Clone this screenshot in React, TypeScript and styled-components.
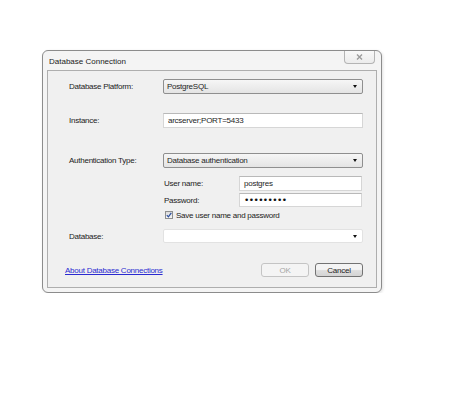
import styled, { createGlobalStyle } from "styled-components";

const GlobalStyle = createGlobalStyle`
  body {
    margin: 0;
    background: #ffffff;
    font-family: "Liberation Sans", Arial, sans-serif;
    color: #1e1e1e;
  }
`;

const Page = styled.div`
  padding: 50px 0 0 42px;
`;

const Window = styled.div`
  width: 340px;
  height: 243px;
  box-sizing: border-box;
  border: 1px solid #8c8c8c;
  border-radius: 6px;
  background: #f4f4f4;
  padding: 0 4px 4px 4px;
  display: flex;
  flex-direction: column;
  box-shadow: 1px 1px 3px rgba(0, 0, 0, 0.12);
`;

const TitleBar = styled.div`
  height: 19px;
  display: flex;
  align-items: center;
  justify-content: space-between;
`;

const Title = styled.span`
  font-size: 8px;
  padding-left: 2px;
  padding-top: 2px;
  color: #222;
`;

const CloseBox = styled.div`
  align-self: flex-start;
  width: 29px;
  height: 12px;
  margin-right: 2px;
  border: 1px solid #b4b4b4;
  border-top: none;
  border-radius: 0 0 4px 4px;
  background: linear-gradient(#f8f8f8, #ececec);
  display: flex;
  align-items: center;
  justify-content: center;
`;

const Panel = styled.div`
  flex: 1;
  border: 1px solid #aeaeae;
  background: #f0f0f0;
  padding: 8px 13px 0 21px;
  display: flex;
  flex-direction: column;
`;

const Row = styled.div<{ $top: number; $h?: number }>`
  display: flex;
  align-items: center;
  margin-top: ${({ $top }) => $top}px;
  height: ${({ $h }) => $h ?? 15}px;
`;

const Label = styled.span<{ $w?: number }>`
  width: ${({ $w }) => $w ?? 94}px;
  flex-shrink: 0;
  font-size: 8px;
  letter-spacing: -0.25px;
  color: #222;
`;

const Select = styled.div<{ $flat?: boolean }>`
  width: 200px;
  height: 100%;
  box-sizing: border-box;
  border: 1px solid ${({ $flat }) => ($flat ? "#e2e2e2" : "#8f8f8f")};
  border-radius: 2px;
  background: ${({ $flat }) =>
    $flat ? "#ffffff" : "linear-gradient(#f6f6f6, #e4e4e4)"};
  display: flex;
  align-items: center;
  justify-content: space-between;
  padding: 0 5px 0 3px;
  font-size: 8px;
  letter-spacing: -0.25px;
`;

const Arrow = styled.span`
  width: 0;
  height: 0;
  border-left: 2.5px solid transparent;
  border-right: 2.5px solid transparent;
  border-top: 3px solid #111;
`;

const Input = styled.div<{ $w?: number }>`
  width: ${({ $w }) => $w ?? 200}px;
  height: 100%;
  box-sizing: border-box;
  border: 1px solid #d6d6d6;
  border-top-color: #b9b9b9;
  background: #ffffff;
  display: flex;
  align-items: center;
  padding: 0 4px;
  font-size: 8px;
  letter-spacing: -0.25px;
`;

const Dots = styled.span`
  font-size: 9px;
  letter-spacing: -0.6px;
  font-family: "DejaVu Sans", sans-serif;
  color: #111;
`;

const Sub = styled.div`
  display: flex;
  align-items: center;
  padding-left: 1px;
  height: 100%;
`;

const Check = styled.span`
  width: 8px;
  height: 8px;
  box-sizing: border-box;
  border: 1px solid #8e8f8f;
  background: linear-gradient(#dcdcdc, #f6f6f6);
  margin: 0 3px 0 2px;
  display: flex;
  align-items: center;
  justify-content: center;
`;

const CheckText = styled.span`
  font-size: 8px;
  letter-spacing: -0.25px;
  color: #222;
`;

const Footer = styled.div`
  display: flex;
  align-items: center;
  margin-top: 20px;
  margin-left: -4px;
  height: 14px;
`;

const Link = styled.a`
  font-size: 8px;
  letter-spacing: -0.25px;
  color: #2a2ad0;
  text-decoration: underline;
  cursor: pointer;
`;

const Buttons = styled.div`
  margin-left: auto;
  display: flex;
  gap: 6px;
  height: 100%;
`;

const Button = styled.button<{ $disabled?: boolean }>`
  width: 48px;
  height: 14px;
  padding: 0;
  box-sizing: border-box;
  border: 1px solid ${({ $disabled }) => ($disabled ? "#c4c4c4" : "#737373")};
  border-radius: 3px;
  background: ${({ $disabled }) =>
    $disabled ? "#f4f4f4" : "linear-gradient(#f4f4f4 45%, #dedede 55%, #d4d4d4)"};
  color: ${({ $disabled }) => ($disabled ? "#a6a6a6" : "#1e1e1e")};
  font-family: "Liberation Sans", Arial, sans-serif;
  font-size: 8px;
  letter-spacing: -0.25px;
`;

export default function App() {
  return (
    <Page>
      <GlobalStyle />
      <Window>
        <TitleBar>
          <Title>Database Connection</Title>
          <CloseBox>
            <svg width="7" height="6" viewBox="0 0 7 6">
              <path d="M1 0.5 L6 5.5 M6 0.5 L1 5.5" stroke="#9a9a9a" strokeWidth="1.4" />
            </svg>
          </CloseBox>
        </TitleBar>
        <Panel>
          <Row $top={0}>
            <Label>Database Platform:</Label>
            <Select>
              PostgreSQL
              <Arrow />
            </Select>
          </Row>
          <Row $top={19}>
            <Label>Instance:</Label>
            <Input>arcserver;PORT=5433</Input>
          </Row>
          <Row $top={25}>
            <Label>Authentication Type:</Label>
            <Select>
              Database authentication
              <Arrow />
            </Select>
          </Row>
          <Row $top={8}>
            <Label />
            <Sub>
              <Label $w={75}>User name:</Label>
              <Input $w={123}>postgres</Input>
            </Sub>
          </Row>
          <Row $top={2} $h={14}>
            <Label />
            <Sub>
              <Label $w={75}>Password:</Label>
              <Input $w={123}>
                <Dots>•••••••••</Dots>
              </Input>
            </Sub>
          </Row>
          <Row $top={2} $h={12}>
            <Label />
            <Check>
              <svg width="6" height="6" viewBox="0 0 6 6">
                <path d="M0.8 3.2 L2.4 4.9 L5.3 0.8" stroke="#2c4f9e" strokeWidth="1.2" fill="none" />
              </svg>
            </Check>
            <CheckText>Save user name and password</CheckText>
          </Row>
          <Row $top={8} $h={14}>
            <Label>Database:</Label>
            <Select $flat>
              <span />
              <Arrow />
            </Select>
          </Row>
          <Footer>
            <Link>About Database Connections</Link>
            <Buttons>
              <Button $disabled>OK</Button>
              <Button>Cancel</Button>
            </Buttons>
          </Footer>
        </Panel>
      </Window>
    </Page>
  );
}
